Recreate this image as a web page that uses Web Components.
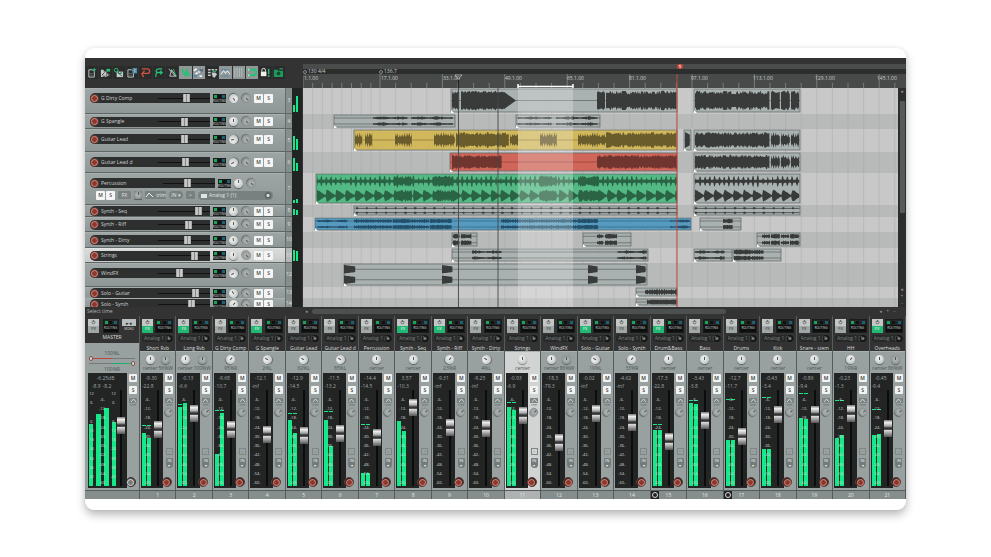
<!DOCTYPE html>
<html lang="en">
<head>
<meta charset="utf-8">
<title>Multitrack session</title>
<style>
html,body{margin:0;background:#fff}
body{font:5px/7px "Open Sans","Noto Sans",sans-serif;color:#ddd}
</style>
</head>
<body>
<daw-window></daw-window>
<script>
const BASE = `*{box-sizing:border-box}button,input,select{font:inherit;margin:0;padding:0;border:0;border-radius:0;min-width:0}
button{display:flex;align-items:center;justify-content:center;color:inherit;background:none}`;
const KNOB = `.knob{width:9px;height:9px;border-radius:50%;flex:none;background:radial-gradient(circle at 40% 35%,#e9eaea 20%,#c4c8c8 70%,#8b9090);box-shadow:0 1px 1px #0006;transform:rotate(var(--a,0deg))}
.knob::before{content:"";width:1px;height:3px;background:#555;margin-bottom:3px}.knob.dim{background:radial-gradient(circle,#a9afae 30%,#949a99 60%,#6e7574)}`;
const ARM = `.arm{width:9px;height:9px;border-radius:50%;flex:none;background:#3a2725;border:1px solid #59403d}
.arm::before{content:"";width:5px;height:5px;border-radius:50%;border:1px solid #e08a7c;background:#8a382e}`;
const ROUTE = `.route{display:flex;flex-direction:column;background:#1b1d1d;color:#d8dcdc;font-size:3px;line-height:4px;flex:none;align-items:center;justify-content:space-between;overflow:hidden}
.io{display:flex;width:100%;justify-content:space-between;padding:1px 1px 0}.io i{width:3px;height:3px;background:#101212}.io i:first-child{background:#18a45a}.io i:last-child{background:#1b5f78}`;

class Base extends HTMLElement {
  connectedCallback(){
    const root = this.attachShadow({mode:'open'});
    root.innerHTML = '<style>' + BASE + this.css() + '</style>' + this.html();
  }
}

/* ---------- Toolbar ---------- */
const G='#27c277', W='#c4c9c9', B='#4d88a8';
const doc=(x=0)=>`<path d="M${1+x} 3h4l2 2v6h-6z" fill="none" stroke="${W}"/><path d="M${2+x} 7h4M${2+x} 9h4" stroke="#888" stroke-width=".6"/>`;
const TOOLS=[
 ['New project',0,doc(1)+`<path d="M8 1v4M6 3h4" stroke="${G}"/>`],
 ['Open project',0,`<path d="M1 3h3v2h3v6H1z" fill="${W}"/><path d="M2 9l3-3M3 10h3" stroke="#333"/><path d="M7 2h4v3H7z" fill="${G}"/><path d="M8 7v3l2-2" stroke="${W}" fill="none"/>`],
 ['Save project',0,`<circle cx="3.500" cy="3.500" r="2" fill="none" stroke="${G}"/><path d="M4 5h7v6H4z" fill="${W}"/><path d="M5 6l5 4M6 5v2h3V5" stroke="#1c7a4c" fill="none"/>`],
 ['Project settings',0,doc()+`<rect x="6" y="1" width="5" height="6" fill="${B}"/><path d="M8.500 2v4" stroke="${W}"/>`],
 ['Undo',0,`<path d="M2 2h6a2.500 2.500 0 0 1 0 5H3M5 4L2 7.500 4 11" fill="none" stroke="#d4523f" stroke-width="1.400"/>`],
 ['Redo',0,`<path d="M10 2H6Q2 3 4 6h6M8 4l2 2-2 2M4 6q-1 2-1 5" fill="none" stroke="${G}" stroke-width="1.400"/>`],
 ['Metronome',0,`<path d="M5 3L3 10h7zM2 2l7 8" fill="none" stroke="${W}"/><path d="M7 2l3 8" stroke="${G}" stroke-width=".8"/>`],
 ['Auto crossfade',1,`<path d="M1 2h2l3 4 2-4v8H5z" fill="${G}"/><path d="M8 2v4l3 4" stroke="${G}" fill="none" stroke-width="1.500"/>`],
 ['Item grouping',1,`<path d="M2 9l3-3M6 6l4-4M1 4l3-2M7 10h3" stroke="#eef" stroke-width="2"/><rect x="1" y="8" width="3" height="3" fill="${B}"/><rect x="7" y="2" width="4" height="3" fill="#58707c"/>`],
 ['Ripple editing',0,`<path d="M1 3h3M5 3h3M9 3h2M1 6h3M1 9h3" stroke="${W}" stroke-width="1.500"/><path d="M5 6h4l2 2-3 4-2-2z" fill="${W}"/><path d="M6 5h4" stroke="${G}"/>`],
 ['Move envelopes',1,`<path d="M1 8l3-4 2 3 2-3 3 4" fill="none" stroke="#fff"/><path d="M2 10h8M2 3h8" stroke="${B}" stroke-width="1.500" stroke-dasharray="1.500 1"/>`],
 ['Grid',1,`<path d="M2 1v10M4.500 1v10M7 1v10M9.500 1v10" stroke="#c3c8c8" stroke-width=".8"/>`],
 ['Snap',1,`<path d="M2 3h5a3 3 0 0 1 0 6H2" fill="none" stroke="${G}" stroke-width="2"/><path d="M2 2v2M2 8v2" stroke="#fff"/>`],
 ['Lock',0,`<rect x="1" y="5" width="6" height="5" fill="#eee"/><path d="M2 5V3.500a2 2 0 0 1 4 0V5" fill="none" stroke="#eee"/><path d="M9.500 2v6M9.500 9v2" stroke="${G}" stroke-width="1.500"/>`],
 ['Media explorer',0,`<path d="M1 3h4l1 1h5v7H1z" fill="#1c9a5c"/><circle cx="6" cy="7" r="2" fill="#174a32"/><path d="M7 2h4" stroke="${G}"/>`]];
customElements.define('tool-bar', class extends Base{
  css(){return `:host{display:flex;align-items:flex-start;height:30px;padding:8px 18px 0 1px;background:#333;gap:1px}
   button{flex:1 1 0;height:13px;background:#2a2c2c}button.on{background:#8f9797}svg{width:11px;height:11px}`}
  html(){return TOOLS.map(([n,on,s])=>`<button aria-label="${n}" class="${on?'on':''}"><svg viewBox="0 0 12 12">${s}</svg></button>`).join('')}
});

/* ---------- Track panel ---------- */
// name, height, fader centre, pan angle, selected, meter heights, meter bottom gap, tall, number
const TRACKS=[
 ['G Dirty Comp',26,185,150,0,[7,16],2,1,3],
 ['G Spangle',15,183,0,0,[0,0],0,0,4],
 ['Guitar Lead',23,183,-100,0,[14,11],2,1,5],
 ['Guitar Lead d',21,184,-120,0,[13,8],2,1,6],
 ['Percussion',32,187,0,0,[3,4],2,1,7],
 ['Synth - Seq',12,197,0,0,[6,5],2,0,8],
 ['Synth - Riff',15,187,0,0,[0,0],0,0,9],
 ['Synth - Dirty',16,186,-10,0,[0,0],0,0,10],
 ['Strings',15,193,0,1,[11,10],2,0,11],
 ['WindFX',24,179,-120,0,[0,0],0,1,12],
 ['Solo - Guitar',11,194,-30,0,[0,0],0,0,13],
 ['Solo - Synth',9,190,40,0,[0,0],0,0,14]];
customElements.define('track-row', class extends Base{
  get t(){return TRACKS[+this.getAttribute('index')]}
  css(){const t=this.t;return KNOB+ARM+ROUTE+`
  :host{display:grid;grid-template-columns:1fr 7px 10px;height:${t[1]}px;overflow:hidden}
  .main{padding:${t[7]?4:0}px 12px 0 5px;display:flex;flex-direction:column;justify-content:${t[7]?'flex-start':'center'};background:linear-gradient(${t[4]?'#dadbdb,#c9cbcb':'#9da6a5,#8f9897'});border-top:1px solid ${t[4]?'#e2e2e2':'#a9b1b0'};border-bottom:1px solid #5f6665;min-width:0}
  .line{display:flex;align-items:center;gap:3px;height:10px;flex:none}
  .bar{flex:1;display:flex;align-items:center;height:10px;background:#2e2f2f;border-radius:5px 0 0 5px;min-width:0}
  .name{flex:1;white-space:nowrap;padding-left:2px;color:#d0d4d4}
  input.f{appearance:none;width:52px;height:9px;background:linear-gradient(#111,#111) center/100% 1px no-repeat}
  input.f::-webkit-slider-thumb{appearance:none;width:7px;height:8px;background:linear-gradient(90deg,#999,#ddd 30%,#888 50%,#ddd 70%,#999)}
  .route{width:13px;height:9px}.ms{display:flex;gap:1px}.ms button,.sub .ms button{width:9px;height:9px;background:#f5f5f5;color:#444;border-radius:1px;font-weight:600}
  .knob+.knob{margin-left:1px}
  .num{background:${t[4]?'#b5b8b8':'#858e8d'};border-left:1px solid #666d6c;border-bottom:1px solid #5f6665;display:flex;align-items:center;justify-content:center;color:#e2e6e5}
  .meter{background:#222424;display:flex;align-items:flex-end;gap:1px;padding:0 4px ${t[6]}px 1px}.meter i{width:2px;background:#16e88a}
  .sub{display:flex;align-items:center;gap:3px;margin-top:2px;padding-left:6px;height:10px;color:#e3e7e7}
  .sub button{height:8px;width:13px;background:#78817f;border-radius:1px}
  .sub svg{width:9px;height:6px}.sub .pill{width:14px;border-radius:4px}
  .sub select{appearance:none;flex:1;height:9px;border-radius:5px;background:radial-gradient(circle at calc(100% - 5px) 50%,#dfe3e3 1px,#5f6867 2px,#5f6867 3px,#0000 4px),linear-gradient(#dfe3e3,#dfe3e3) 3px 3px/6px 4px no-repeat,#788180;color:#e0e4e4;padding-left:11px}
  `}
  html(){const t=this.t,p=t[0]=='Percussion';
   const ms=`<div class="ms"><button aria-label="Mute ${t[0]}">M</button><button aria-label="Solo ${t[0]}">S</button></div>`;
   return `<div class="main"><div class="line"><div class="bar"><button class="arm" aria-label="Arm ${t[0]}"></button><span class="name">${t[0]}</span>
   <input class="f" type="range" aria-label="${t[0]} volume" min="0" max="44" value="${t[2]-161-(p?5:0)}"></div>
   <button class="route" aria-label="Routing"><span class="io"><i></i><i></i><i></i></span><span>ROUTING</span></button>
   <button class="knob" style="--a:${t[3]}deg" aria-label="Pan"></button><button class="knob dim" style="--a:135deg" aria-label="Width"></button>${p?'<span style="width:14px"></span>':ms}</div>
   ${p?`<div class="sub">${ms}<button aria-label="Effects">FX</button><button class="knob dim" style="width:8px;height:8px" aria-label="Phase"></button><button style="width:21px;gap:2px" aria-label="Trim envelope"><svg viewBox="0 0 9 6"><path d="M1 5l3-4 4 4" stroke="#eee" fill="none"/></svg>trim</button><button class="pill">IN ▾</button><button style="width:9px" aria-label="Record mode">&gt;</button><select aria-label="Input"><option>Analog 1 (1)</option></select></div>`:''}
   </div><div class="num">${t[8]}</div><div class="meter"><i style="height:${t[5][0]}px"></i><i style="height:${t[5][1]}px"></i></div>`}
});

/* ---------- Ruler ---------- */
customElements.define('time-ruler', class extends Base{
  css(){return `:host{display:grid;grid-template-rows:6px 5px 5px 14px;height:30px;background:#333;color:#c9cdcd}
  .band{background:#4a4c4c;display:flex}.band b{margin-left:62%;color:#fff;background:#c54b3c;border-radius:2px;font-size:4px;line-height:5px;padding:0 2px}
  .tempo{display:grid;grid-template-columns:76fr 527fr;align-items:center;background:#2c2d2d;line-height:5px}
  .tempo span{display:flex;align-items:center;gap:1px}.tempo i{width:4px;height:4px;border-radius:50%;border:1px solid #888}
  .scale{background:#484a4a;padding-right:8px;display:grid}.scale>*{grid-area:1/1}
  svg{width:100%;height:14px}.labels{display:grid;grid-template-columns:77fr repeat(8,62fr) 22fr;line-height:8px}.labels span{padding-left:1px;white-space:nowrap;min-width:0}`}
  html(){let d='';
   for(let i=0;i<8;i++)d+=`M${303+i*9.7} ${i?9:2}V14`;
   for(let i=0;i<34;i++)d+=`M${380+i*15.6} ${i%4?9:0}V14`;
   return `<span></span><div class="band"><b>1</b></div><div class="tempo"><span><i></i>130 4/4</span><span><i></i>136.7</span></div>
   <div class="scale"><svg viewBox="303 0 595 14" preserveAspectRatio="none"><path d="${d}" stroke="#8d9191" stroke-width=".7"/><path d="M518 10v4M573 10v4M518 12.500h55" stroke="#fff" stroke-width="1.500"/><path d="M455 1h7l-3.500 4z" fill="#333" stroke="#ccc" stroke-width=".7"/><path d="M458.500 5v9" stroke="#222"/><path d="M677 0v14" stroke="#c54b3c"/></svg>
   <div class="labels">${['1.1.00','17.1.00','33.1.00','49.1.00','65.1.00','81.1.00','97.1.00','113.1.00','129.1.00','145.1.00'].map(x=>`<span>${x}</span>`).join('')}</div></div>`}
});

/* ---------- Arrange lanes ---------- */
let seed=7;const rnd=()=>(seed=(seed*16807)%2147483647)/2147483647;
// Envelope shapes: d dense, m medium, t thin, b beats, e light beats, f fade-out, c chunk, s sparse ticks
const busy=x=>(x>395&&x<412)||(x>434&&x<453)||(x>540&&x<557)||(x>578&&x<597);
function wave([a,b,kind],cy,amp){
  let up='',dn='';
  for(let x=a,n=0;x<=b;x+=.8,n++){
    const u=(x-a)/(b-a);let v;
    if(kind=='d')v=.62+.38*rnd();
    else if(kind=='m')v=n%3?.35+.3*rnd():.7+.3*rnd();
    else if(kind=='t')v=.25+.35*rnd()*(1+Math.sin(x/3))/1.3;
    else if(kind=='b'){const k=((x-316)%9.7)/9.7;v=(k<.1?k*10:1-k)*(.8+.2*rnd())+.08;if(busy(x))v=.5+.4*rnd()}
    else if(kind=='e'){const k=((x-316)%4.85)/4.85;v=(k<.3?.85:.28)*(.6+.4*rnd());if(busy(x))v=.4+.5*rnd()}
    else if(kind=='f')v=u<.78?.75+.25*rnd():Math.max(.03,(1-u)*4);
    else if(kind=='c')v=1-.35*u;
    else if(kind=='s')v=((x-a)%9.7)<2?.5:.06;
    v=Math.max(v,.05)*amp;
    up+=`L${x.toFixed(1)} ${(cy-v).toFixed(1)}`;dn=`L${x.toFixed(1)} ${(cy+v).toFixed(1)}`+dn;
  }
  return 'M'+up.slice(1)+dn+'Z';
}
const Q='#a8b0af',LAST=[[695,770,'d'],[771,780,'d'],[781,790,'d'],[791,799,'d']];
// lane: [height, channels, clips[[x0,x1,fill,ink,segments]]]
const LANES=[
 [26,1,[[451,677,Q,0,[[452,460,'d'],[461,516,'f'],[597,605,'d'],[606,677,'d']]],[694,800,Q,0,LAST]]],
 [15,2,[[334,455,Q,0,[[373,408,'t'],[411,453,'t']]],[516,600,Q,0,[[518,552,'t'],[556,598,'t']]]]],
 [23,1,[[354,677,'#d2b754','#6b5c2c',[[355,363,'m'],[365,373,'m'],[395,412,'m'],[434,455,'m'],[456,509,'d'],[510,518,'m'],[540,557,'m'],[578,606,'m'],[606,677,'d']]],[684,691,Q,0,[[685,690,'c']]],[694,800,Q,0,[[695,770,'d'],[771,780,'m'],[781,790,'m'],[791,799,'m']]]]],
 [21,1,[[450,677,'#d26052','#70352e',[[452,502,'d'],[597,677,'d']]],[694,800,Q,0,[[695,770,'d'],[771,780,'m'],[781,790,'m'],[791,799,'m']]]]],
 [32,2,[[316,677,'#4bb980','#2a6444',[[317,677,'b']]],[694,800,Q,0,[[695,799,'b']]]]],
 [12,2,[[354,677,Q,0,[[356,677,'s']]],[694,800,Q,0,[[695,799,'s']]]]],
 [15,2,[[315,691,'#4d98be','#234f69',[[317,348,'t'],[354,393,'m'],[393,410,'d'],[410,430,'m'],[430,452,'d'],[501,578,'m'],[578,598,'d'],[670,690,'t']]],[700,741,Q,0,[[723,733,'d']]]]],
 [16,2,[[452,477,Q,0,[[453,460,'d'],[461,472,'d']]],[583,631,Q,0,[[597,604,'m'],[605,617,'d']]],[757,800,Q,0,[[762,770,'m'],[771,780,'d'],[781,789,'m'],[790,799,'d']]]]],
 [15,2,[[452,648,Q,0,[[472,502,'t'],[617,647,'t']]],[694,732,Q,0,[[695,725,'t']]],[733,781,Q,0,[[734,750,'d'],[750,764,'m']]]]],
 [24,2,[[344,647,Q,0,[[344,356,'c'],[442,453,'c'],[588,598,'c'],[636,646,'c']]]]],
 [11,1,[[636,677,Q,0,[[645,677,'m']]]]],
 [9,1,[[636,677,Q,0,[[647,677,'d']]]]]];
customElements.define('arrange-lane', class extends Base{
  get n(){return +this.getAttribute('index')}
  css(){return `:host{display:block;height:${LANES[this.n][0]}px;background:${this.n%2?'#b8bab9':'#c7c8c7'}}svg{display:block;width:100%;height:100%}`}
  html(){
    const i=this.n,[h,ch,clips]=LANES[i];let s='',g='';
    for(let k=1;k<8;k++)g+=`M${303+k*9.7} 0V${h}`;for(let k=0;k<34;k++)g+=`M${380+k*15.6} 0V${h}`;
    s+=`<path d="${g}" stroke="#9ea2a1" stroke-width=".5" opacity=".7"/>`;
    for(const [a,b,f,ink,seg] of clips){
      s+=`<rect x="${a}" y="1" width="${b-a}" height="${h-3}" fill="${f}" fill-opacity=".93" stroke="#5d6665" stroke-width=".7"/>`;
      for(let c=0;c<ch;c++){
        const H=h-3,cy=1+H*(2*c+1)/(2*ch),amp=H/(2*ch)*(i==9?.8:i==6||i==7?.75:i==2||i==3?.8:i==4?.95:.86);
        s+=`<path d="M${a} ${cy}H${b}" stroke="${ink||'#3b3e3d'}" stroke-width=".5"/>`;
        s+=`<path d="${seg.map(g=>wave(i==4&&c==0?[g[0],g[1],'e']:g,cy,amp)).join('')}" fill="${ink||'#383b3a'}"/>`;
      }
      s+=`<path d="M${a} ${h-4}v3h3z" fill="#fff"/>`;
    }
    s+=`<rect x="518" y="0" width="55" height="${h}" fill="#fff" opacity=".24"/><path d="M458.500 0V${h}M498 0V${h}" stroke="#454847" stroke-width=".9"/><path d="M677 0V${h}" stroke="#c44538" stroke-width="1"/>`;
    return `<svg viewBox="303 0 595 ${h}" preserveAspectRatio="none">${s}</svg>`}
});

/* ---------- Mixer ---------- */
// name, fx on, pans, volume, peak, left top, right top, fader centre, peak-hold y
const STRIPS=[
 ['Short Rvb',1,['center','56%W'],'-9.30','-22.8',433,438,430,425],
 ['Long Rvb',1,['center','100%W'],'-0.13','-6.6',407,403,414,404],
 ['G Dirty Comp',0,['95%R'],'-9.68','-10.7',454,413,430,410],
 ['G Spangle',1,['2%L'],'-12.1','-inf',0,0,435,0],
 ['Guitar Lead',0,['62%L'],'-12.9','-14.5',420,433,436,413],
 ['Guitar Lead d',0,['85%L'],'-11.5','-13.2',420,446,434,411],
 ['Percussion',0,['center'],'-14.4','-14.5',473,473,438,424],
 ['Synth - Seq',1,['center'],'3.57','-10.3',421,431,408,0],
 ['Synth - Riff',1,['23%R'],'-9.31','-inf',0,0,428,0],
 ['Synth - Dirty',0,['4%L'],'-9.25','-inf',0,0,429,0],
 ['Strings',0,['center'],'-0.93','-6.9',407,410,416,402],
 ['WindFX',0,['center','86%W'],'-18.3','-79.3',0,0,443,0],
 ['Solo - Guitar',1,['19%L'],'-0.02','-inf',0,0,414,0],
 ['Solo - Synth',0,['33%R'],'-4.62','-inf',0,0,423,0],
 ['Drum&amp;Bass',1,['center'],'-17.3','-22.8',430,430,442,424],
 ['Bass',0,['center'],'-3.43','-3.8',403,404,421,400],
 ['Drums',0,['center'],'-12.7','-11.7',440,440,437,399],
 ['Kick',0,['center'],'-0.43','-3.4',449,449,415,397],
 ['Snare - stem',0,['center'],'-0.86','-9.4',418,419,415,393],
 ['HH',0,['19%R'],'-0.23','-1.3',438,435,414,400],
 ['Overheads',1,['center','86%W'],'-0.45','-9.4',435,434,429,409]];
const MIX = KNOB+ARM+ROUTE+`
 :host{display:flex;flex-direction:column;min-width:0;border-right:1px solid #555c5b;background:#98a1a0}
 .head{background:#333;display:flex;flex-direction:column;padding:3px 2px 0}
 .tops{display:flex;justify-content:space-between;height:14px}
 .fx{width:11px;height:14px;flex-direction:column;justify-content:space-between;background:#c3c8c7;color:#222;font-size:4px;line-height:6px}
 .fx svg{width:5px;height:6px}.fx span{width:11px;height:7px;background:#a0a7a6}.fx.on span{background:#22b873;color:#fff}
 .route{width:18px;height:14px;background:#242626;border:1px solid #1b1c1c}.route>span:last-child{background:#0d0f0f;width:100%;height:7px;line-height:7px}
 .name{white-space:nowrap;text-align:center;line-height:9px;height:10px;color:#dadede;display:flex;justify-content:center}
 .panel{display:grid;background:#232525;height:115px;grid-template-rows:9px 6px 1fr;font-size:4px;color:#a0a5a5;min-width:0}
 .vol{text-align:center;line-height:11px;padding-right:2px;font-size:5px}
 .pk{line-height:9px;padding-left:1px;font-size:5px}
 .body{display:grid;padding-bottom:2px}.body>*{grid-row:1}
 .bars{display:flex;gap:1px;align-items:flex-end;padding-left:1px}.bars i{width:4px;background:#14e888}
 .sc{display:flex;flex-direction:column;justify-content:space-between;padding-top:8px;text-align:center;line-height:7px;z-index:1;color:#d2dbd7}
 input.v{appearance:none;writing-mode:vertical-lr;direction:rtl;width:8px;height:96px;margin-top:2px;background:linear-gradient(#0b0c0c,#0b0c0c) center/2px 100% no-repeat}
 input.v::-webkit-slider-thumb{appearance:none;width:8px;height:17px;background:linear-gradient(#777,#eee 15%,#aaa 35%,#333 47%,#333 55%,#ddd 60%,#999 80%,#555)}
 .side{display:flex;flex-direction:column;align-items:center;padding-top:1px}
 .ms{width:8px;height:8px;background:#f2f3f3;color:#333;border-radius:1px;font-weight:600;margin-bottom:4px}
 .env{width:8px;height:5px;background:#7c8584}.env svg{width:7px;height:5px}.tr{font-size:3px;line-height:5px;color:#555d5c}
 .grow{flex:1}.side .knob{width:8px;height:8px}
 .rec{width:7px;height:7px;border:1px solid #7e8786;color:#6c7574;font-size:4px;margin-bottom:3px}
 .in{width:7px;height:10px;border-radius:1px 1px 4px 4px;background:#737c7b;color:#eef1f1;font-size:4px;line-height:5px;flex-direction:column}
 .side .arm{width:10px;height:10px;margin:9px 5px 1px 0}
 .foot{margin-top:2px;height:9px;border-top:1px solid #555c5b;background:#858e8d;text-align:center;line-height:8px;color:#e3e7e7}`;
const FX=on=>`<button class="fx ${on?'on':''}" aria-label="Effects"><svg viewBox="0 0 5 6"><circle cx="2.500" cy="3.300" r="1.500" fill="none" stroke="#555" stroke-width=".7"/><path d="M2.500 1v2" stroke="#555" stroke-width=".7"/></svg><span>FX</span></button>`;
const RT=`<button class="route" aria-label="Routing"><span class="io"><i></i><i></i><i></i></span><span>ROUTING</span></button>`;
const SC=`<div class="sc">${[6,12,18,24,30,36,42,48,54,60].map(v=>`<span>-${v}-</span>`).join('')}</div>`;
const EDGE=c=>`<div class="sc ${c}">${[12,6,'',6,12,18,24,30,36,42].map(v=>`<span>${v||'&nbsp;'}</span>`).join('')}</div>`;
const SIDE=(n,m)=>`<div class="side"><button class="ms" aria-label="Mute ${n}">M</button><button class="ms" aria-label="Solo ${n}">S</button><button class="env" aria-label="Envelope"><svg viewBox="0 0 7 5"><path d="M1 4l2.500-3L6 4" fill="none" stroke="#e2e5e5" stroke-width=".8"/></svg></button><span class="tr">trim</span>${m?'':'<button class="knob dim" style="--a:45deg" aria-label="Phase"></button>'}<span class="grow"></span>${m?'':'<button class="rec" aria-label="Record mode">&gt;</button><button class="in" aria-label="Input monitor">IN<span>▾</span></button>'}<button class="arm" aria-label="Arm ${n}"></button></div>`;
customElements.define('channel-strip', class extends Base{
  get i(){return +this.getAttribute('index')}
  css(){const sel=this.i==10;return MIX+`
   :host{${sel?'background:#d2d4d4':''}}
   .head{height:35px}select{appearance:none;width:100%;height:7px;margin-top:2px;background:radial-gradient(circle at calc(100% - 4px) 50%,#777 1px,#151616 2px,#151616 3px,#0000 4px),#272929;border-radius:3px;color:#7b8080;padding-left:2px;line-height:7px}
   .name{margin-top:2px}
   .pans{display:flex;justify-content:center;gap:1px;height:22px;padding-top:3px;color:#4b5251;line-height:8px;border-top:1px solid #aab2b1}.pans div{display:flex;flex-direction:column;align-items:center;min-width:13px}
   .main{display:grid;grid-template-columns:minmax(0,1fr) 12px;padding-left:1px}
   .body{grid-template-columns:13px 8px}.bars,.sc{grid-column:1}input.v{grid-column:2}
   .col{display:flex;flex-direction:column;justify-content:flex-end}.hold{height:1px}
   .foot{${sel?'background:#aeb2b2;':''}display:flex;justify-content:center;position:relative}.fold{position:absolute;left:0;top:0;width:8px;height:8px;background:#222}.fold::before{content:"";width:4px;height:4px;border:1px solid #ddd;border-radius:50%}`}
  html(){const i=this.i,[n,fx,p,v,pk,l,r,f,hold]=STRIPS[i];
   const col=t=>t?`<span class="col">${hold&&hold<t?`<i class="hold" style="margin-bottom:${Math.max(0,t-hold-1)}px"></i>`:''}<i style="height:${486-t}px"></i></span>`:'';
   return `<div class="head"><div class="tops">${FX(fx)}${RT}</div><select aria-label="Input of ${n}"><option>Analog 1 (1</option></select><div class="name">${n}</div></div>
   <div class="pans">${p.map((t,k)=>`<div><button class="knob ${k?'dim':''}" style="--a:${{'%R':40,'%L':-60}[t.slice(-2)]||0}deg" aria-label="Pan"></button><span>${t}</span></div>`).join('')}</div>
   <div class="main"><div class="panel"><div class="vol">${v}</div><div class="pk">${pk}</div><div class="body"><div class="bars">${col(l)}${col(r)}</div>${SC}<input class="v" type="range" aria-label="${n} volume" min="0" max="79" value="${Math.max(0,478-f)}"></div></div>${SIDE(n)}</div>
   <div class="foot">${i==14||i==16?'<button class="fold" aria-label="Folder"></button>':''}${i+1}</div>`}
});
customElements.define('master-strip', class extends Base{
  css(){return MIX+`.head{height:27px;padding:3px 3px 0}.mono{width:14px;height:7px;background:#b9bfbe;color:#222;font-size:5px}.route{width:16px}
   .mn{display:flex;flex-direction:column;font-size:3px;line-height:6px;align-items:center}
   .pan{height:30px;padding:7px 4px 0;display:flex;flex-direction:column;align-items:center;color:#4b5251;line-height:6px}
   .pan input{appearance:none;width:100%;height:5px;background:linear-gradient(90deg,#b5483c 50%,#777 50%) center/100% 1px no-repeat}.pan input+input{background:linear-gradient(90deg,#777 50%,#1fae6b 50%) center/100% 1px no-repeat}
   .pan input::-webkit-slider-thumb{appearance:none;width:4px;height:5px;border-radius:2px;background:#ddd;border:1px solid #8a4a44}
   .main{display:grid;grid-template-columns:minmax(0,1fr) 12px;padding-left:3px}
   .vol{padding-right:4px}.pk{display:flex;gap:2px;padding-left:4px}
   .body{grid-template-columns:9px 11px 9px 8px}.bars{grid-column:1/4}.sc{grid-column:2}.sc.l{grid-column:1;padding:2px 2px 6px 0}.sc.r{grid-column:3;padding:2px 0 6px 2px}input.v{grid-column:4}.bars{gap:3px}.bars i{width:4px}.bars i:nth-child(2),.bars i:nth-child(3){width:5px}
   .side .arm{background:#555;border-color:#333}.arm::before{border-color:#ddd;background:#777}`}
  html(){return `<div class="head"><div class="tops">${FX(0)}${RT}<span class="mn"><button class="mono" aria-label="Mono">▸◂</button>MONO</span></div><div class="name">MASTER</div></div>
   <div class="pan"><span>100%L</span><input type="range" aria-label="Left pan" value="0"><input type="range" aria-label="Right pan" value="100"><span>100%R</span></div>
   <div class="main"><div class="panel"><div class="vol">-6.25dB</div><div class="pk"><span>-8.9</span><span>-8.2</span></div><div class="body"><div class="bars"><i style="height:62px"></i><i style="height:72px"></i><i style="height:78px"></i><i style="height:64px"></i></div>${EDGE('l')}${SC}${EDGE('r')}<input class="v" type="range" aria-label="Master volume" min="0" max="79" value="52"></div></div>${SIDE('master',1)}</div><div class="foot"></div>`}
});

/* ---------- Window ---------- */
customElements.define('daw-window', class extends Base{
  css(){return `:host{display:block;margin:48px 85px;background:#fff;padding:10px 0 11px;border-radius:9px;box-shadow:0 5px 10px #0004,0 0 5px #0001}
   .app{background:#333}
   .top{display:grid;grid-template-columns:218px minmax(0,1fr)}
   .tracks{padding-right:1px}.arr{display:grid;grid-template-columns:minmax(0,1fr) 8px}
   .vs{background:#2c2d2d;display:flex;flex-direction:column;align-items:center;justify-content:space-between;color:#888}.vs i{width:5px;height:112px;background:#575a5a;margin-bottom:68px;border-radius:1px}
   .status{display:grid;grid-template-columns:218px minmax(0,1fr);height:9px;line-height:9px;color:#b4b8b8}.status>span{padding-left:2px}
   .hs{display:flex;align-items:center;gap:4px;padding:0 10px 0 2px;color:#888}.hs i{width:70%;height:5px;border-radius:3px;background:#4d5050}.hs em{margin-left:auto;font-style:normal;display:flex;gap:4px}
   .mixer{display:grid;grid-template-columns:55px repeat(21,minmax(0,1fr))}`}
  html(){const rep=(tag,n)=>Array.from({length:n},(_,i)=>`<${tag} index="${i}"></${tag}>`).join('');
   return `<div class="app"><div class="top"><tool-bar></tool-bar><time-ruler></time-ruler>
   <div class="tracks">${rep('track-row',12)}</div><div class="arr"><div>${rep('arrange-lane',12)}</div><div class="vs"><span>●</span><i></i><span>●<br>+<br>−</span></div></div></div>
   <div class="status"><span>Select time</span><div class="hs"><span>●</span><i></i><em><span>●</span><span>+</span><span>−</span></em></div></div>
   <div class="mixer"><master-strip></master-strip>${rep('channel-strip',21)}</div></div>`}
});
</script>
</body>
</html>
